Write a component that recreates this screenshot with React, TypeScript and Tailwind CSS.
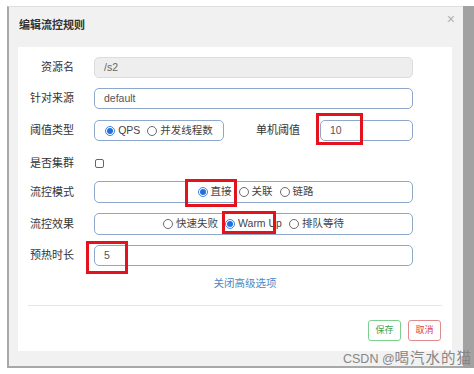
import React from "react";

const FONT = { fontFamily: 'Arial, "Liberation Sans", "Noto Sans CJK SC", sans-serif' };

function Radio({ checked, label }: { checked?: boolean; label: string }) {
  return (
    <span className="flex items-center gap-[3px]">
      {checked ? (
        <span className="w-[10px] h-[10px] rounded-full border border-[#3b82e6] bg-white flex items-center justify-center">
          <span className="w-[6px] h-[6px] rounded-full bg-[#1f6fe0]" />
        </span>
      ) : (
        <span className="w-[10px] h-[10px] rounded-full border border-[#6b6b6b] bg-white" />
      )}
      <span>{label}</span>
    </span>
  );
}

function Label({ children }: { children: React.ReactNode }) {
  return <div className="w-[56px] text-right text-[11px] text-[#333] leading-none">{children}</div>;
}

export default function App() {
  return (
    <div className="w-[474px] h-[374px] bg-white overflow-hidden relative" style={FONT}>
      <div className="flex pt-[6px] h-[368px]">
        <div className="w-[7px] shrink-0" />
        <div className="w-[456px] h-[362px] shrink-0 bg-[#f1f1f1] border-l-[2px] border-b-[2px] border-t border-[#a8a8a8] border-t-[#e0e0e0] flex flex-col">
          <div className="h-[40px] relative flex items-start pt-[13px] pl-[10px]">
            <span className="text-[11px] font-bold text-[#333] leading-none">编辑流控规则</span>
            <span className="absolute right-[8px] top-[5px] text-[14px] text-[#b0b0b0] leading-none">×</span>
          </div>
          <div className="ml-[9px] w-[434px] h-[304px] bg-white flex flex-col pt-[10px] text-[10.5px] text-[#444]">
            <div className="flex items-center h-[21px]">
              <Label>资源名</Label>
              <div className="ml-[20px] w-[319px] h-[21px] rounded-[5px] bg-[#eeeeee] border border-[#dcdcdc] flex items-center pl-[9px] text-[#666]">/s2</div>
            </div>
            <div className="flex items-center h-[21px] mt-[10px]">
              <Label>针对来源</Label>
              <div className="ml-[20px] w-[319px] h-[21px] rounded-[5px] border border-[#8ea8cc] flex items-center pl-[9px] text-[#555]">default</div>
            </div>
            <div className="flex items-center h-[21px] mt-[11px]">
              <Label>阈值类型</Label>
              <div className="ml-[20px] w-[130px] h-[21px] rounded-[5px] border border-[#8ea8cc] flex items-center justify-center gap-[7px] text-[#444]">
                <Radio checked label="QPS" />
                <Radio label="并发线程数" />
              </div>
              <div className="w-[76px] text-right text-[11px] text-[#333] leading-none">单机阈值</div>
              <div className="ml-[20px] w-[93px] h-[21px] rounded-[5px] border border-[#8ea8cc] flex items-center pl-[9px] text-[#555]">10</div>
            </div>
            <div className="flex items-center h-[18px] mt-[13px]">
              <Label>是否集群</Label>
              <div className="ml-[21px] w-[9px] h-[9px] rounded-[2px] border border-[#666] bg-white" />
            </div>
            <div className="flex items-center h-[22px] mt-[9px]">
              <Label>流控模式</Label>
              <div className="ml-[20px] w-[319px] h-[22px] rounded-[5px] border border-[#8ea8cc] flex items-center justify-center gap-[7px] pl-[4px] text-[#444]">
                <Radio checked label="直接" />
                <Radio label="关联" />
                <Radio label="链路" />
              </div>
            </div>
            <div className="flex items-center h-[22px] mt-[10px]">
              <Label>流控效果</Label>
              <div className="ml-[20px] w-[319px] h-[22px] rounded-[5px] border border-[#8ea8cc] flex items-center justify-center gap-[7px] text-[#444]">
                <Radio label="快速失败" />
                <Radio checked label="Warm Up" />
                <Radio label="排队等待" />
              </div>
            </div>
            <div className="flex items-center h-[21px] mt-[10px]">
              <Label>预热时长</Label>
              <div className="ml-[20px] w-[319px] h-[21px] rounded-[5px] border border-[#8ea8cc] flex items-center pl-[9px] text-[#555]">5</div>
            </div>
            <div className="h-[14px] mt-[10px] flex items-center justify-center pl-[20px] text-[10.5px] text-[#4a88c8] leading-none">关闭高级选项</div>
            <div className="mt-[15px] mx-[10px] h-px bg-[#e6e6e6]" />
            <div className="mt-[14px] flex justify-end gap-[7px] pr-[11px]">
              <div className="w-[33px] h-[21px] rounded-[3px] border border-[#7ccf8c] text-[#3aa357] text-[9px] flex items-center justify-center">保存</div>
              <div className="w-[33px] h-[21px] rounded-[3px] border border-[#e08a8e] text-[#d9434b] text-[9px] flex items-center justify-center">取消</div>
            </div>
          </div>
        </div>
        <div className="flex-1 bg-[#a2a2a2]" />
      </div>

      <div className="absolute left-[316px] top-[113px] w-[47px] h-[32px] border-[3px] border-[#e3121c]" />
      <div className="absolute left-[185px] top-[179px] w-[52px] h-[28px] border-[3px] border-[#e3121c]" />
      <div className="absolute left-[222px] top-[211px] w-[54px] h-[23px] border-[3px] border-[#e3121c]" />
      <div className="absolute left-[86px] top-[241px] w-[42px] h-[33px] border-[3px] border-[#e3121c]" />

      <div className="absolute left-[343px] top-[351px] whitespace-nowrap leading-none text-[#868686] flex items-baseline">
        <span className="text-[12.5px]">CSDN @</span>
        <span className="text-[14.5px] tracking-[1px]">喝汽水的猫</span>
      </div>
    </div>
  );
}
